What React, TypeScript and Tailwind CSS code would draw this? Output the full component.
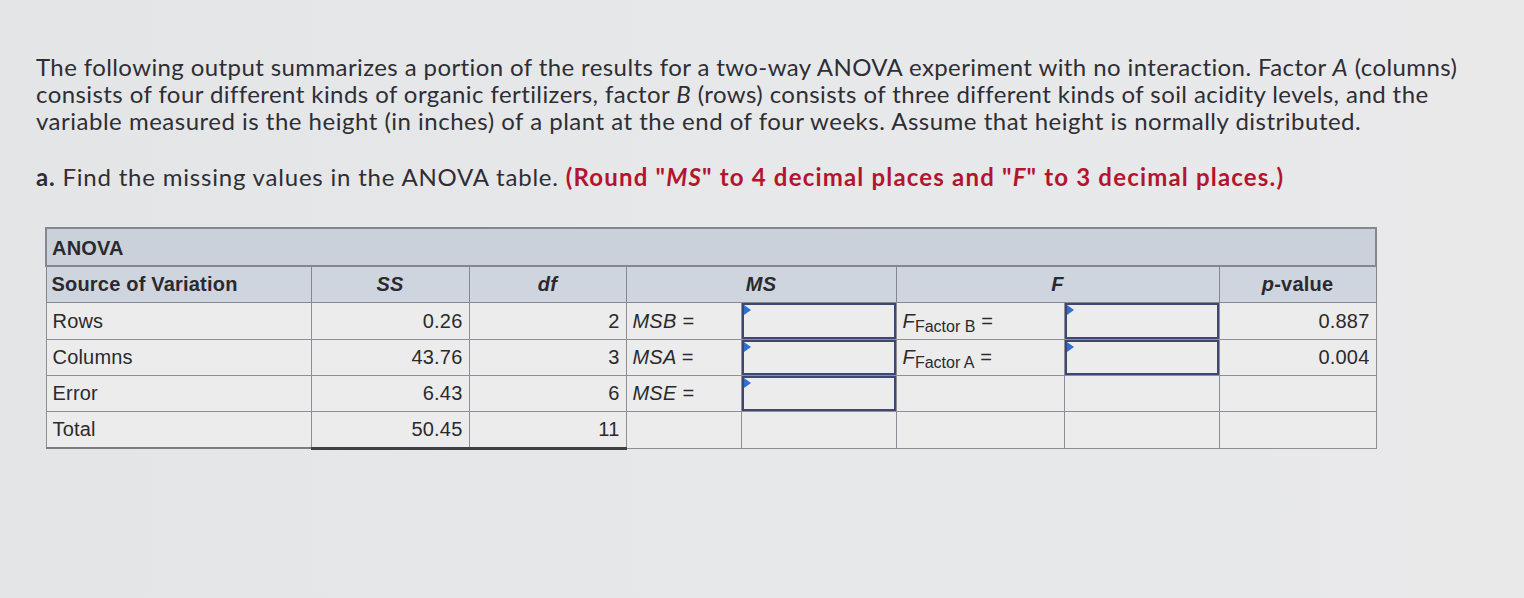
import React from "react";

const body = { fontFamily: "Lato, 'Open Sans', sans-serif" };
const tbl = { fontFamily: "'Liberation Sans', Arial, sans-serif" };

function Flag() {
  return (
    <span className="absolute left-0 top-0 h-0 w-0 border-y-[5px] border-l-[7px] border-y-transparent border-l-[#2f6fd0]" />
  );
}

function InputCell({ h }: { h: string }) {
  return (
    <td className="border border-[#8e8e94] p-0 align-top">
      <div className={`relative w-full border-2 border-[#3d4775] bg-[#ececec] ${h}`}>
        <Flag />
      </div>
    </td>
  );
}

const cell = "border border-[#8e8e94] bg-[#ececec] px-[6px]";

export default function App() {
  return (
    <div className="min-h-[598px] w-[1524px] bg-gradient-to-r from-[#e4e5e7] via-[#e7e8ea] to-[#e9e9ea] text-[#2e2e34]">
      <div className="pl-9 pt-[53px] text-[24px] leading-[27px]" style={body}>
        <p className="whitespace-nowrap tracking-[0.4px]">
          The following output summarizes a portion of the results for a two-way ANOVA experiment with no interaction. Factor <i>A</i> (columns)
        </p>
        <p className="whitespace-nowrap tracking-[0.42px]">
          consists of four different kinds of organic fertilizers, factor <i>B</i> (rows) consists of three different kinds of soil acidity levels, and the
        </p>
        <p className="whitespace-nowrap tracking-[0.5px]">
          variable measured is the height (in inches) of a plant at the end of four weeks. Assume that height is normally distributed.
        </p>
        <p className="mt-[29px] whitespace-nowrap tracking-[0.8px]">
          <b>a.</b> Find the missing values in the ANOVA table.{" "}
          <b className="tracking-[1.18px] text-[#b3152f]">
            (Round "<i>MS</i>" to 4 decimal places and "<i>F</i>" to 3 decimal places.)
          </b>
        </p>
      </div>

      <div className="pl-[45px] pt-[37px]">
        <table className="w-[1330px] table-fixed border-collapse text-[20px] tracking-[0.2px] text-[#2a2a2e]" style={tbl}>
          <colgroup>
            <col className="w-[265px]" />
            <col className="w-[158px]" />
            <col className="w-[157px]" />
            <col className="w-[115px]" />
            <col className="w-[155px]" />
            <col className="w-[168px]" />
            <col className="w-[155px]" />
            <col className="w-[157px]" />
          </colgroup>
          <tbody>
            <tr className="h-[38px]">
              <td colSpan={8} className="border-2 border-[#85868e] bg-[#cbd1da] px-[5px] pt-[2px] text-left font-bold">
                ANOVA
              </td>
            </tr>
            <tr className="h-[36px] bg-[#cfd5de] font-bold">
              <td className="border border-[#85868e] px-[5px]">Source of Variation</td>
              <td className="border border-[#85868e] text-center italic">SS</td>
              <td className="border border-[#85868e] text-center italic">df</td>
              <td colSpan={2} className="border border-[#85868e] text-center italic">MS</td>
              <td colSpan={2} className="border border-[#85868e] text-center italic">F</td>
              <td className="border border-[#85868e] text-center">
                <i>p</i>-value
              </td>
            </tr>
            <tr className="h-[37px]">
              <td className={cell}>Rows</td>
              <td className={`${cell} text-right`}>0.26</td>
              <td className={`${cell} text-right`}>2</td>
              <td className={`${cell} italic`}>MSB =</td>
              <InputCell h="h-[36px]" />
              <td className={cell}>
                <i>F</i>
                <sub className="text-[16px] not-italic tracking-normal">Factor B</sub> =
              </td>
              <InputCell h="h-[36px]" />
              <td className={`${cell} text-right`}>0.887</td>
            </tr>
            <tr className="h-[36px]">
              <td className={cell}>Columns</td>
              <td className={`${cell} text-right`}>43.76</td>
              <td className={`${cell} text-right`}>3</td>
              <td className={`${cell} italic`}>MSA =</td>
              <InputCell h="h-[35px]" />
              <td className={cell}>
                <i>F</i>
                <sub className="text-[16px] not-italic tracking-normal">Factor A</sub> =
              </td>
              <InputCell h="h-[35px]" />
              <td className={`${cell} text-right`}>0.004</td>
            </tr>
            <tr className="h-[36px]">
              <td className={cell}>Error</td>
              <td className={`${cell} text-right`}>6.43</td>
              <td className={`${cell} text-right`}>6</td>
              <td className={`${cell} italic`}>MSE =</td>
              <InputCell h="h-[35px]" />
              <td className={cell}></td>
              <td className={cell}></td>
              <td className={cell}></td>
            </tr>
            <tr className="h-[37px]">
              <td className={`${cell} border-b-2 border-b-[#7b7c84]`}>Total</td>
              <td className={`${cell} border-b-[3px] border-b-[#3f4045] text-right`}>50.45</td>
              <td className={`${cell} border-b-[3px] border-b-[#3f4045] text-right`}>11</td>
              <td className={cell}></td>
              <td className={cell}></td>
              <td className={cell}></td>
              <td className={cell}></td>
              <td className={cell}></td>
            </tr>
          </tbody>
        </table>
      </div>
    </div>
  );
}
